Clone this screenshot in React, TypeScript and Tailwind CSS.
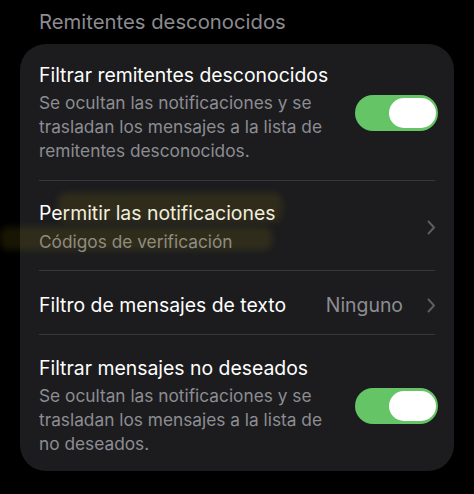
import React from "react";

const Chevron = () => (
  <svg width="9" height="15" viewBox="0 0 9 15" fill="none" className="shrink-0">
    <path d="M1.5 1.5L7 7.5L1.5 13.5" stroke="#5d5d61" strokeWidth="2" strokeLinecap="round" strokeLinejoin="round" />
  </svg>
);

const Toggle = () => (
  <div className="w-[83px] h-[36px] rounded-full bg-[#65c466] flex items-center justify-end pr-[2px] shrink-0">
    <div className="w-[47px] h-[30px] rounded-full bg-white" />
  </div>
);

const Divider = () => <div className="mx-[19px] h-px bg-[#38383a]" />;

export default function App() {
  return (
    <div
      className="relative w-[474px] h-[494px] bg-black overflow-hidden"
      style={{ fontFamily: "Inter, 'Liberation Sans', sans-serif" }}
    >
      <h2 className="pl-[39px] pt-[10px] text-[20.3px] leading-[24px] text-[#8b8b90]">
        Remitentes desconocidos
      </h2>

      <div className="mt-[10px] mx-[20px] rounded-[26px] bg-[#1c1c1e]">
        {/* Filtrar remitentes */}
        <div className="flex items-center gap-4 pl-[19px] pr-[16px] pt-[19px] pb-[17px]">
          <div className="flex-1">
            <p className="text-[19.4px] leading-[24px] text-white">Filtrar remitentes desconocidos</p>
            <p className="mt-1 text-[17.3px] leading-[24px] text-[#8d8d93]">
              Se ocultan las notificaciones y se trasladan los mensajes a la lista de remitentes desconocidos.
            </p>
          </div>
          <Toggle />
        </div>
        <Divider />

        {/* Permitir notificaciones */}
        <div className="flex items-center pl-[19px] pr-[18px] pt-[20px] pb-[16px]">
          <div className="flex-1">
            <p className="text-[19.4px] leading-[24px] text-white">Permitir las notificaciones</p>
            <p className="mt-[5px] text-[17.3px] leading-[24px] text-[#8d8d93]">Códigos de verificación</p>
          </div>
          <Chevron />
        </div>
        <Divider />

        {/* Filtro de mensajes */}
        <div className="flex items-center pl-[19px] pr-[18px] pt-[22px] pb-[17px]">
          <p className="flex-1 text-[19.4px] leading-[24px] text-white">Filtro de mensajes de texto</p>
          <span className="mr-[24px] text-[19.4px] leading-[24px] text-[#8d8d93]">Ninguno</span>
          <Chevron />
        </div>
        <Divider />

        {/* Filtrar no deseados */}
        <div className="flex items-center gap-4 pl-[19px] pr-[16px] pt-[21px] pb-[15px]">
          <div className="flex-1">
            <p className="text-[19.4px] leading-[24px] text-white">Filtrar mensajes no deseados</p>
            <p className="mt-1 text-[17.3px] leading-[24px] text-[#8d8d93]">
              Se ocultan las notificaciones y se trasladan los mensajes a la lista de no deseados.
            </p>
          </div>
          <Toggle />
        </div>
      </div>

      {/* highlighter marks */}
      <div className="pointer-events-none absolute left-[58px] top-[193px] w-[224px] h-[29px] rounded-[8px] bg-[#a08a10]/15 blur-[3px]" />
      <div className="pointer-events-none absolute left-0 top-[227px] w-[272px] h-[23px] rounded-[8px] bg-[#a08a10]/15 blur-[3px]" />
    </div>
  );
}
